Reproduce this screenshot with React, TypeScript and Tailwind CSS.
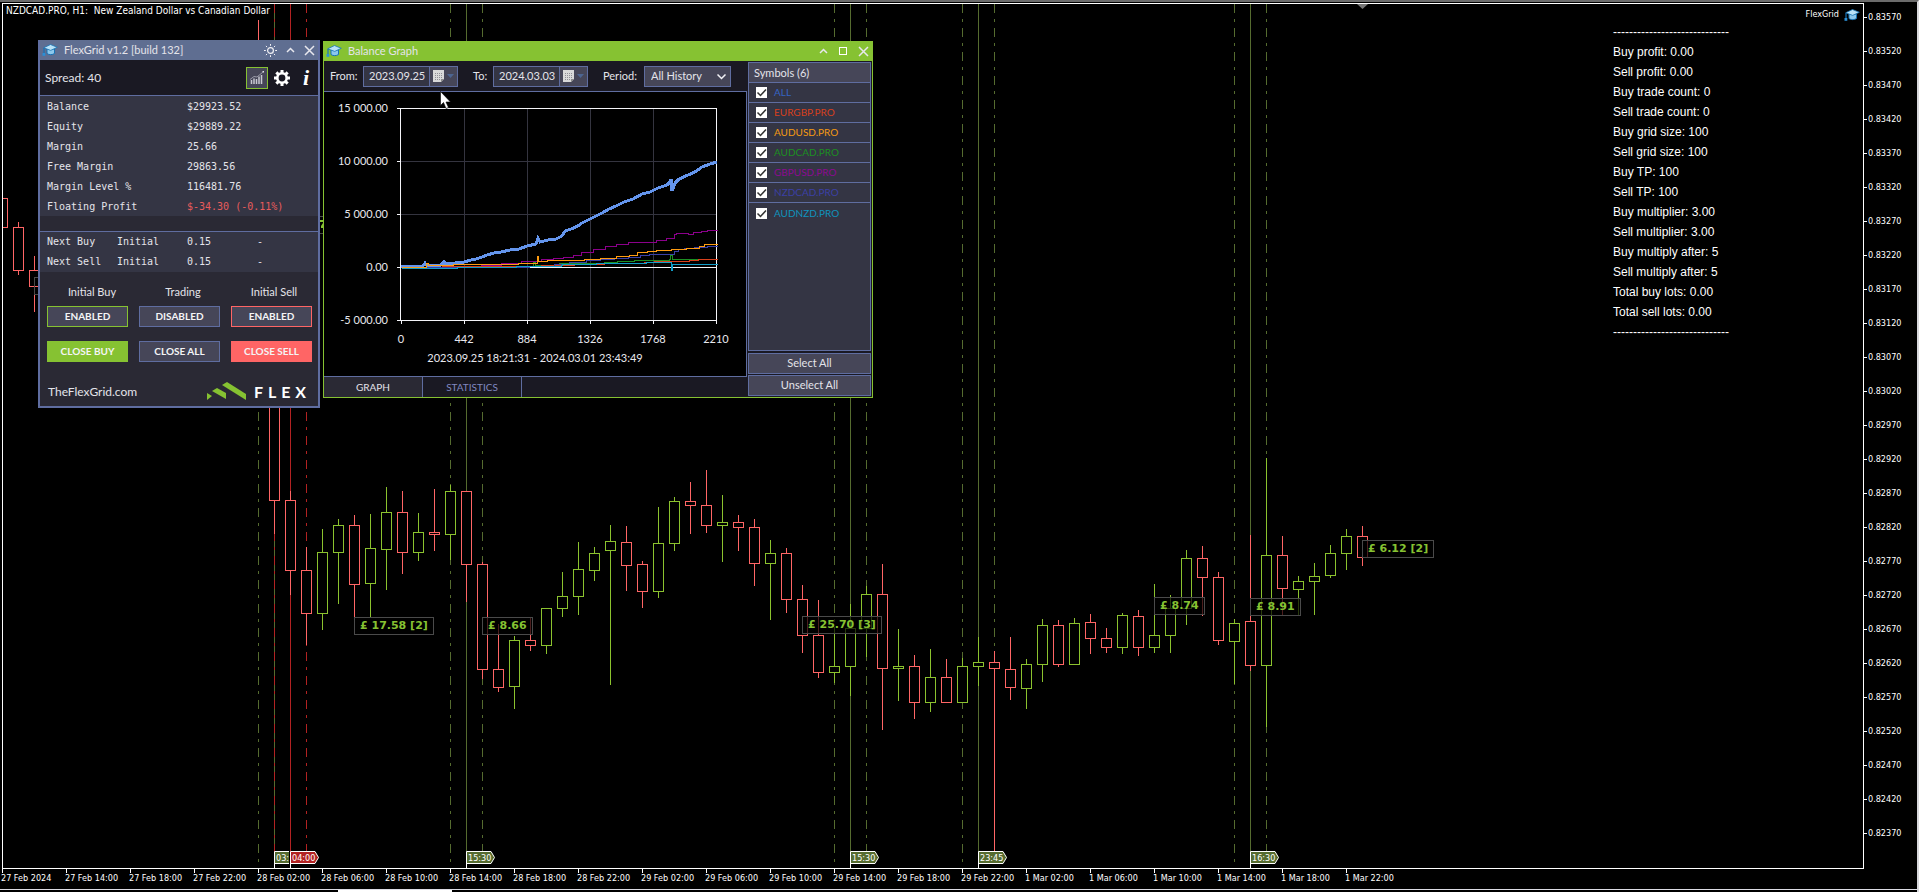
import { useState } from "react";
import type { ReactNode } from "react";

type Candle = [
  x: number,
  side: "up" | "down",
  high: number,
  top: number,
  bottom: number,
  low: number,
];

const candles: Candle[] = [
  [2, "down", 198, 198, 227, 227],
  [18, "down", 222, 227, 270, 274],
  [34, "down", 256, 270, 286, 311],
  [258, "down", 20, 60, 200, 240],
  [274, "down", 200, 240, 500, 533],
  [290, "down", 491, 500, 570, 594],
  [306, "down", 547, 570, 613, 644],
  [322, "up", 529, 552, 613, 629],
  [338, "up", 519, 525, 552, 603],
  [354, "down", 515, 525, 584, 629],
  [370, "up", 514, 548, 583, 616],
  [386, "up", 487, 512, 549, 589],
  [402, "down", 491, 512, 552, 573],
  [418, "up", 513, 532, 552, 560],
  [434, "down", 489, 532, 534, 550],
  [450, "up", 485, 491, 534, 559],
  [466, "down", 491, 491, 564, 601],
  [482, "down", 562, 564, 669, 678],
  [498, "down", 624, 669, 687, 691],
  [514, "up", 636, 640, 686, 708],
  [530, "down", 617, 640, 645, 650],
  [546, "up", 608, 608, 645, 653],
  [562, "up", 572, 596, 608, 616],
  [578, "up", 542, 569, 596, 614],
  [594, "up", 547, 553, 570, 580],
  [610, "up", 525, 541, 550, 684],
  [626, "down", 526, 542, 565, 590],
  [642, "down", 561, 564, 591, 607],
  [658, "up", 507, 543, 591, 597],
  [674, "up", 497, 501, 543, 550],
  [690, "down", 482, 501, 505, 533],
  [706, "down", 470, 505, 525, 532],
  [722, "up", 495, 522, 525, 561],
  [738, "down", 515, 522, 527, 550],
  [754, "down", 519, 527, 563, 585],
  [770, "up", 540, 553, 563, 619],
  [786, "down", 548, 553, 599, 612],
  [802, "down", 585, 599, 635, 652],
  [818, "down", 600, 635, 672, 677],
  [834, "up", 627, 666, 672, 682],
  [850, "up", 604, 628, 666, 695],
  [866, "up", 586, 594, 628, 656],
  [882, "down", 564, 594, 668, 729],
  [898, "up", 629, 666, 668, 700],
  [914, "down", 655, 666, 702, 718],
  [930, "up", 649, 677, 702, 711],
  [946, "down", 659, 677, 702, 702],
  [962, "up", 658, 666, 702, 702],
  [978, "up", 637, 662, 666, 685],
  [994, "down", 651, 662, 668, 851],
  [1010, "down", 637, 669, 687, 699],
  [1026, "up", 659, 664, 688, 708],
  [1042, "up", 619, 625, 664, 681],
  [1058, "down", 620, 625, 664, 666],
  [1074, "up", 618, 623, 664, 664],
  [1090, "down", 614, 622, 638, 653],
  [1106, "down", 628, 638, 647, 652],
  [1122, "up", 613, 615, 647, 653],
  [1138, "down", 610, 616, 647, 655],
  [1154, "up", 584, 635, 647, 652],
  [1170, "up", 595, 608, 635, 652],
  [1186, "up", 550, 558, 608, 624],
  [1202, "down", 546, 558, 577, 615],
  [1218, "down", 572, 577, 640, 644],
  [1234, "up", 619, 623, 641, 683],
  [1250, "down", 535, 621, 665, 670],
  [1266, "up", 458, 555, 665, 726],
  [1282, "down", 536, 555, 588, 614],
  [1298, "up", 576, 581, 589, 614],
  [1314, "up", 563, 576, 581, 614],
  [1330, "up", 545, 553, 575, 577],
  [1346, "up", 529, 536, 553, 569],
  [1362, "down", 526, 536, 557, 565],
];

const OLIVE = "#556b2f";
const BRICK = "#b22222";

const newsLines = [
  { x: 258, color: OLIVE, dashed: true },
  { x: 274, color: OLIVE, dashed: false },
  { x: 274, color: BRICK, dashed: true },
  { x: 290, color: BRICK, dashed: false },
  { x: 306, color: BRICK, dashed: true },
  { x: 450, color: OLIVE, dashed: true },
  { x: 466, color: OLIVE, dashed: false },
  { x: 482, color: OLIVE, dashed: true },
  { x: 834, color: OLIVE, dashed: true },
  { x: 850, color: OLIVE, dashed: false },
  { x: 866, color: OLIVE, dashed: true },
  { x: 962, color: OLIVE, dashed: true },
  { x: 978, color: OLIVE, dashed: false },
  { x: 994, color: OLIVE, dashed: true },
  { x: 1234, color: OLIVE, dashed: true },
  { x: 1250, color: OLIVE, dashed: false },
  { x: 1266, color: OLIVE, dashed: true },
];

// the 04:00 flag starts before the 03:30 one ends, so the first is cut short
const newsFlags = [
  { x: 274, time: "03:", color: OLIVE, width: 15 },
  { x: 290, time: "04:00", color: BRICK, width: 30 },
  { x: 466, time: "15:30", color: OLIVE, width: 30 },
  { x: 850, time: "15:30", color: OLIVE, width: 30 },
  { x: 978, time: "23:45", color: OLIVE, width: 30 },
  { x: 1250, time: "16:30", color: OLIVE, width: 30 },
];

const profitTags = [
  { x: 354, y: 617, text: "£ 17.58 [2]" },
  { x: 482, y: 617, text: "£ 8.66" },
  { x: 802, y: 616, text: "£ 25.70 [3]" },
  { x: 1154, y: 597, text: "£ 8.74" },
  { x: 1250, y: 598, text: "£ 8.91" },
  { x: 1362, y: 540, text: "£ 6.12 [2]" },
];

const prices = Array.from({ length: 25 }, (_, i) =>
  (0.8357 - i * 0.0005).toFixed(5),
);

const times = [
  "27 Feb 2024",
  "27 Feb 14:00",
  "27 Feb 18:00",
  "27 Feb 22:00",
  "28 Feb 02:00",
  "28 Feb 06:00",
  "28 Feb 10:00",
  "28 Feb 14:00",
  "28 Feb 18:00",
  "28 Feb 22:00",
  "29 Feb 02:00",
  "29 Feb 06:00",
  "29 Feb 10:00",
  "29 Feb 14:00",
  "29 Feb 18:00",
  "29 Feb 22:00",
  "1 Mar 02:00",
  "1 Mar 06:00",
  "1 Mar 10:00",
  "1 Mar 14:00",
  "1 Mar 18:00",
  "1 Mar 22:00",
];

const infoLines = [
  "-----------------------------",
  "Buy profit: 0.00",
  "Sell profit: 0.00",
  "Buy trade count: 0",
  "Sell trade count: 0",
  "Buy grid size: 100",
  "Sell grid size: 100",
  "Buy TP: 100",
  "Sell TP: 100",
  "Buy multiplier: 3.00",
  "Sell multiplier: 3.00",
  "Buy multiply after: 5",
  "Sell multiply after: 5",
  "Total buy lots: 0.00",
  "Total sell lots: 0.00",
  "-----------------------------",
];

const account = [
  { label: "Balance", value: "$29923.52" },
  { label: "Equity", value: "$29889.22" },
  { label: "Margin", value: "25.66" },
  { label: "Free Margin", value: "29863.56" },
  { label: "Margin Level %", value: "116481.76" },
  { label: "Floating Profit", value: "$-34.30 (-0.11%)", loss: true },
];

const nextOrders = [
  ["Next Buy", "Initial", "0.15", "-"],
  ["Next Sell", "Initial", "0.15", "-"],
];

const symbols = [
  { name: "ALL", className: "text-[#3564c4]" },
  { name: "EURGBP.PRO", className: "text-[#d8401c]" },
  { name: "AUDUSD.PRO", className: "text-[#f59a12]" },
  { name: "AUDCAD.PRO", className: "text-[#1c8f22]" },
  { name: "GBPUSD.PRO", className: "text-[#8c0a92]" },
  { name: "NZDCAD.PRO", className: "text-[#3b40a6]" },
  { name: "AUDNZD.PRO", className: "text-[#0f93bd]" },
];

const balanceCurve = [
  [77, 175], [99, 174], [101, 171], [103, 174], [117, 173], [120, 170], [122, 172],
  [131, 171], [140, 170], [147, 168], [152, 167], [158, 165], [163, 163], [170, 161],
  [177, 160], [186, 158], [195, 157], [203, 154], [212, 152], [214, 146], [216, 150],
  [224, 148], [232, 147], [238, 144], [241, 139], [247, 137], [254, 134], [258, 131],
  [264, 128], [272, 124], [278, 121], [285, 117], [292, 114], [300, 110], [309, 107],
  [318, 102], [326, 100], [334, 96], [343, 93], [346, 90], [347, 87], [348, 99],
  [351, 91], [355, 87], [364, 83], [371, 80], [378, 75], [386, 72], [393, 70],
];

const symbolCurves: { color: string; points: number[][] }[] = [
  {
    color: "#8b008b",
    points: [
      [77, 175], [150, 174], [157, 173], [177, 171], [197, 169], [217, 167], [229, 166],
      [239, 165], [249, 163], [257, 160], [269, 157], [281, 154], [292, 152], [304, 150],
      [317, 150], [332, 148], [342, 146], [350, 142], [352, 141], [364, 142], [369, 140],
      [377, 139], [383, 138], [393, 138],
    ],
  },
  {
    color: "#1c8f22",
    points: [
      [77, 175], [172, 174], [205, 174], [209, 170], [211, 173], [235, 171], [280, 170],
      [293, 169], [310, 168], [345, 167], [346, 163], [348, 167], [393, 166],
    ],
  },
  {
    color: "#d8401c",
    points: [
      [77, 175], [118, 174], [200, 174], [217, 173], [250, 172], [280, 171], [320, 170],
      [330, 169], [365, 168], [374, 167], [393, 167],
    ],
  },
  {
    color: "#3b40a6",
    points: [
      [77, 175], [205, 174], [230, 172], [245, 170], [262, 168], [276, 167], [290, 166],
      [304, 165], [316, 163], [325, 162], [335, 162], [350, 159], [354, 157], [360, 156],
      [370, 155], [383, 154], [393, 153],
    ],
  },
  {
    color: "#ff9c11",
    points: [
      [77, 175], [101, 175], [102, 171], [104, 173], [128, 173], [129, 172], [165, 172],
      [194, 171], [213, 170], [213, 164], [214, 169], [223, 168], [240, 168], [260, 167],
      [276, 166], [292, 164], [305, 163], [313, 160], [323, 159], [332, 158], [347, 157],
      [362, 156], [375, 154], [380, 152], [388, 152], [393, 151],
    ],
  },
  {
    color: "#0f9cc8",
    points: [
      [77, 176], [133, 175], [192, 174], [237, 173], [238, 172], [250, 172], [272, 171],
      [322, 170], [342, 170], [346, 170], [347, 178], [348, 172], [393, 172],
    ],
  },
];

// a symbol's balance moves only when a trade closes, so it is drawn as steps
function stepPath(points: number[][]) {
  return points
    .map(([x, y], i) => (i === 0 ? `M${x} ${y}` : `H${x}V${y}`))
    .join("");
}

function CapIcon() {
  return (
    <svg width="16" height="14" viewBox="0 0 16 14" aria-hidden="true">
      <path d="M5 6v4.500c1.800 1.500 5.500 1.500 7.500 0V6z" fill="#8cc8ec" stroke="#1672b4" />
      <path d="M8.500 1.500 15.300 4.300 8.700 7.400 1.700 4.800z" fill="#b9e2f7" stroke="#1672b4" strokeWidth=".8" />
      <path d="M2 5v5" stroke="#1672b4" strokeWidth="1.200" />
      <path d="M.5 10h2.800v2.800H.5z" fill="#2b8fd6" />
    </svg>
  );
}

function ChevronUpIcon() {
  return (
    <svg width="9" height="6" viewBox="0 0 9 6" fill="none" aria-hidden="true">
      <path d="M1 5 4.500 1.500 8 5" stroke="#e8e8ee" strokeWidth="1.500" />
    </svg>
  );
}

function CloseIcon() {
  return (
    <svg width="11" height="11" viewBox="0 0 11 11" fill="none" aria-hidden="true">
      <path d="M1 1l9 9M10 1l-9 9" stroke="#e8e8ee" strokeWidth="1.500" />
    </svg>
  );
}

function SunIcon() {
  return (
    <svg width="13" height="13" viewBox="0 0 13 13" fill="none" aria-hidden="true">
      <circle cx="6.500" cy="6.500" r="2.900" stroke="#f2f2f6" strokeWidth="1.200" />
      <path
        d="M6.500 0v1.800M6.500 11.200V13M0 6.500h1.800M11.200 6.500H13M1.900 1.900l1.200 1.200M9.900 9.900l1.200 1.200M11.100 1.900 9.900 3.100M3.100 9.900l-1.200 1.200"
        stroke="#f2f2f6"
      />
    </svg>
  );
}

function GearIcon() {
  return (
    <svg width="16" height="16" viewBox="0 0 16 16" fill="none" aria-hidden="true">
      <circle cx="8" cy="8" r="4.700" stroke="#fff" strokeWidth="2.600" />
      {[0, 45, 90, 135].map((angle) => (
        <path
          key={angle}
          d="M8 0v3M8 13v3"
          stroke="#fff"
          strokeWidth="3"
          transform={`rotate(${angle} 8 8)`}
        />
      ))}
    </svg>
  );
}

function BarsIcon() {
  return (
    <svg width="14" height="13" viewBox="0 0 14 13" fill="none" aria-hidden="true">
      <path
        d="M1.500 13V9M4 13V7.500M6.500 13V8M9 13V5.500M11.500 13V4"
        stroke="#c9c9d2"
        strokeWidth="1.500"
      />
      <path d="M0 8.500 4 5.500l3 .5 6-5" stroke="#9a9aa8" />
      <path d="M12 0h2v2z" fill="#e4e4ea" />
    </svg>
  );
}

function CalendarIcon() {
  return (
    <svg width="11" height="12" viewBox="0 0 11 12" aria-hidden="true">
      <path d="M0 0h11v9l-3 3H0z" fill="#d9d9d9" />
      <path d="M8 12V9h3z" fill="#8b8b8b" />
      <path
        d="M2 3.500h7M2 5.500h7M2 7.500h7M2 9.500h5"
        stroke="#8e8e94"
        strokeDasharray="1 1"
      />
    </svg>
  );
}

function FlexMark() {
  return (
    <svg width="39" height="18" viewBox="0 0 39 18" fill="#86c232" aria-hidden="true">
      <path d="M0 11l5 3-5 4z" />
      <path d="M5 9l5-3 9 5v6z" />
      <path d="M15 3l5-3 19 12v6z" />
    </svg>
  );
}

function CandleShape({ data }: { data: Candle }) {
  const [x, side, high, top, bottom, low] = data;
  const color = side === "up" ? "#8bc22e" : "#ff6565";
  return (
    <g stroke={color} fill="none" shapeRendering="crispEdges">
      {high < top && <path d={`M${x + 0.5} ${high}V${top}`} />}
      {low > bottom && <path d={`M${x + 0.5} ${bottom}V${low + 1}`} />}
      <rect x={x - 4.5} y={top + 0.5} width="10" height={bottom - top} fill="#000" />
    </g>
  );
}

function PriceChart() {
  return (
    <svg className="absolute inset-0 h-full w-full" role="img" aria-label="NZDCAD.PRO H1 candles">
      <g transform="translate(-3 -4)">
        {newsLines.map((line, i) => (
          <line
            key={i}
            x1={line.x + 0.5}
            x2={line.x + 0.5}
            y1="4"
            y2="100%"
            stroke={line.color}
            strokeDasharray={line.dashed ? "9 6 3 6" : undefined}
            shapeRendering="crispEdges"
          />
        ))}
        {candles.map((candle) => (
          <CandleShape key={candle[0]} data={candle} />
        ))}
        <path d="M34.500 277.500h6M34.500 294.500h6M34.500 277v18M318 216.500h6M318 233.500h6" stroke="#4a4a4a" />
        <path d="M320 220h3v2h-3zM321 226l2-3v5h-2z" fill="#86c232" />
        <path d="M1357 4h11l-5.500 5z" fill="#777" />
      </g>
    </svg>
  );
}

type Flag = (typeof newsFlags)[number];

function NewsFlag({ flag }: { flag: Flag }) {
  return (
    <div
      className="absolute bottom-0 h-[17px] overflow-hidden"
      style={{ left: flag.x - 3, width: flag.width }}
    >
      <svg width="30" height="17" className="absolute left-0 top-0" aria-hidden="true">
        <path d="M.5 17V.5H25l3.500 6L25 12.500H.5" fill={flag.color} stroke="#fff" />
      </svg>
      <span className="relative block pl-[2px] leading-[14px] text-white">{flag.time}</span>
    </div>
  );
}

type DateFieldProps = {
  id: string;
  label: string;
  labelClass: string;
  value: string;
};

function DateField({ id, label, labelClass, value }: DateFieldProps) {
  return (
    <div className="flex items-center">
      <label htmlFor={id} className={labelClass}>
        {label}
      </label>
      <div className="flex h-[21px] w-[95px] border border-[#5f6da0] bg-[#343544]">
        <input
          id={id}
          type="text"
          defaultValue={value}
          className="min-w-0 flex-1 bg-transparent pl-[5px] outline-none"
        />
        <button
          type="button"
          aria-label={`Pick date ${label}`}
          className="flex w-7 items-center gap-[3px] border-l border-[#5f6da0] bg-[#464658] pl-[3px]"
        >
          <CalendarIcon />
          <svg width="7" height="4" aria-hidden="true">
            <path d="M0 0h7L3.500 4z" fill="#4d6591" />
          </svg>
        </button>
      </div>
    </div>
  );
}

function PanelButton({ className, children }: { className: string; children: ReactNode }) {
  return (
    <button type="button" className={`h-[21px] border font-bold text-[#f4f4f6] ${className}`}>
      {children}
    </button>
  );
}

function FlexGridPanel() {
  return (
    <section className="absolute left-[38px] top-[38px] w-[282px] border-2 border-t-0 border-[#5f6da0] bg-[#2a2934] font-['Lato',sans-serif] text-[11px] text-[#e4e4ea]">
      <header className="flex h-5 items-center bg-[#5f6e91] pl-[2px] pr-[3px]">
        <CapIcon />
        <h2 className="ml-[6px] flex-1">FlexGrid v1.2 [build 132]</h2>
        <div className="flex items-center gap-[9px]">
          <button type="button" aria-label="Theme"><SunIcon /></button>
          <button type="button" aria-label="Collapse"><ChevronUpIcon /></button>
          <button type="button" aria-label="Close"><CloseIcon /></button>
        </div>
      </header>

      <div className="flex h-9 items-center border-b border-[#5f6da0] bg-[#1a1923] pl-[5px] pr-2">
        <p className="flex-1 text-[12px]">Spread: 40</p>
        <button
          type="button"
          aria-label="Balance graph"
          className="flex h-[22px] w-[22px] items-center justify-center border border-[#86c232] bg-[#464658]"
        >
          <BarsIcon />
        </button>
        <button type="button" aria-label="Settings" className="ml-[6px]"><GearIcon /></button>
        <button
          type="button"
          aria-label="Info"
          className="ml-3 w-2 font-['Liberation_Serif',serif] text-[22px] font-bold italic leading-5 text-white"
        >
          i
        </button>
      </div>

      <table className="w-full table-fixed bg-[#343544] font-['DejaVu_Sans_Mono',monospace] text-[10px]">
        <tbody>
          {account.map((row) => (
            <tr key={row.label} className="h-5">
              <th scope="row" className="w-[147px] pl-[7px] text-left font-normal">{row.label}</th>
              <td className={row.loss ? "text-[#e85c5c]" : ""}>{row.value}</td>
            </tr>
          ))}
        </tbody>
      </table>

      <table className="mt-[15px] w-full table-fixed border-t border-[#5f6da0] bg-[#343544] font-['DejaVu_Sans_Mono',monospace] text-[10px]">
        <tbody>
          {nextOrders.map(([label, kind, lots, level]) => (
            <tr key={label} className="h-5">
              <th scope="row" className="w-[77px] pl-[7px] text-left font-normal">{label}</th>
              <td className="w-[70px]">{kind}</td>
              <td className="w-[70px]">{lots}</td>
              <td>{level}</td>
            </tr>
          ))}
        </tbody>
      </table>

      <div className="grid grid-cols-3 gap-x-[11px] pl-3 pr-1 pt-[12px] text-center">
        <span className="leading-4">Initial Buy</span>
        <span className="leading-4">Trading</span>
        <span className="leading-4">Initial Sell</span>
      </div>
      <div className="grid grid-cols-3 gap-x-[11px] gap-y-[14px] pl-[7px] pr-[6px] pt-[6px] text-[10px]">
        <PanelButton className="border-[#86c232] bg-[#464658]">ENABLED</PanelButton>
        <PanelButton className="border-[#5f6da0] bg-[#464658]">DISABLED</PanelButton>
        <PanelButton className="border-[#ff6565] bg-[#464658]">ENABLED</PanelButton>
        <PanelButton className="border-[#86c232] bg-[#86c232]">CLOSE BUY</PanelButton>
        <PanelButton className="border-[#5f6da0] bg-[#464658]">CLOSE ALL</PanelButton>
        <PanelButton className="border-[#ff6565] bg-[#ff6565]">CLOSE SELL</PanelButton>
      </div>

      <footer className="mt-5 flex h-6 items-end pb-[6px] pl-2 pr-3">
        <a href="#site" className="flex-1 text-[12px] leading-4">TheFlexGrid.com</a>
        <FlexMark />
        <span className="ml-2 flex w-[52px] justify-between text-[16px] font-bold leading-4 text-white">
          <span>F</span>
          <span>L</span>
          <span>E</span>
          <span>X</span>
        </span>
      </footer>
    </section>
  );
}

const gridX = [77, 140, 203, 266, 329, 392];
const gridY = [16, 69, 122, 175, 228];

function BalanceChart() {
  const xLabels = ["0", "442", "884", "1326", "1768", "2210"];
  const yLabels = ["15 000.00", "10 000.00", "5 000.00", "0.00", "-5 000.00"];
  return (
    <svg
      width="422"
      height="284"
      className="block font-['Lato',sans-serif] text-[11px]"
      role="img"
      aria-label="Balance by trade"
    >
      <g stroke="#34343f" shapeRendering="crispEdges">
        {gridX.slice(1, 5).map((x) => (
          <path key={x} d={`M${x}.5 16V228`} />
        ))}
        {gridY.slice(1, 3).map((y) => (
          <path key={y} d={`M77 ${y}.5H392`} />
        ))}
      </g>
      <g stroke="#f4f4f8" fill="none" shapeRendering="crispEdges">
        <rect x="76.500" y="16.500" width="316" height="212" />
        <path d="M77 175.500H393" />
        {gridY.map((y) => (
          <path key={y} d={`M73 ${y}.5h4`} />
        ))}
        {gridX.map((x) => (
          <path key={x} d={`M${x}.5 228v4`} />
        ))}
      </g>
      <polyline
        points={balanceCurve.join(" ")}
        fill="none"
        stroke="#6495ed"
        strokeWidth="3"
        shapeRendering="crispEdges"
      />
      {symbolCurves.map((curve) => (
        <path
          key={curve.color}
          d={stepPath(curve.points)}
          transform="translate(.5 .5)"
          fill="none"
          stroke={curve.color}
          shapeRendering="crispEdges"
        />
      ))}
      <g fill="#e8e8ee">
        {yLabels.map((label, i) => (
          <text key={label} x="64" y={gridY[i] + 4} textAnchor="end">{label}</text>
        ))}
        {xLabels.map((label, i) => (
          <text key={label} x={gridX[i]} y="251" textAnchor="middle">{label}</text>
        ))}
        <text x="211" y="270" textAnchor="middle">
          2023.09.25 18:21:31 - 2024.03.01 23:43:49
        </text>
      </g>
    </svg>
  );
}

function BalanceWindow() {
  const [hidden, setHidden] = useState<string[]>([]);

  const toggle = (name: string) =>
    setHidden((prev) =>
      prev.includes(name) ? prev.filter((item) => item !== name) : [...prev, name],
    );

  return (
    <section className="absolute left-[323px] top-[39px] w-[550px] border border-t-0 border-[#86c232] bg-[#1a1923] font-['Lato',sans-serif] text-[11px] text-[#e4e4ea]">
      <header className="flex h-5 items-center bg-[#86c232] pl-[2px] pr-[3px]">
        <CapIcon />
        <h2 className="ml-[6px] flex-1">Balance Graph</h2>
        <div className="flex items-center gap-[11px]">
          <button type="button" aria-label="Collapse"><ChevronUpIcon /></button>
          <button type="button" aria-label="Maximize" className="h-2 w-2 border border-white" />
          <button type="button" aria-label="Close"><CloseIcon /></button>
        </div>
      </header>

      <div className="flex">
        <div className="w-[423px]">
          <div className="flex h-[30px] items-center gap-[15px] pl-[6px]">
            <DateField id="from" label="From:" labelClass="w-[33px]" value="2023.09.25" />
            <DateField id="to" label="To:" labelClass="w-5" value="2024.03.03" />
            <div className="flex items-center">
              <label htmlFor="period" className="w-[41px]">Period:</label>
              <div className="relative">
                <select
                  id="period"
                  className="h-[21px] w-[87px] appearance-none border border-[#5f6da0] bg-[#464658] pl-[6px] outline-none"
                >
                  <option>All History</option>
                </select>
                <svg width="9" height="6" className="pointer-events-none absolute right-[5px] top-2" fill="none" aria-hidden="true">
                  <path d="M.5.500l4 4 4-4" stroke="#f2f2f6" strokeWidth="1.500" />
                </svg>
              </div>
            </div>
          </div>
          <div className="border-y border-r border-[#5f6da0] bg-black">
            <BalanceChart />
          </div>
          <div className="flex h-5" role="tablist">
            <button type="button" role="tab" className="w-[98px] bg-[#2a2934] text-[10px]">GRAPH</button>
            <button type="button" role="tab" className="w-[100px] border-x border-[#5f6da0] text-[10px] text-[#8088c0]">
              STATISTICS
            </button>
          </div>
        </div>

        <div className="ml-px flex flex-1 flex-col gap-px pb-px pr-px pt-px">
          <div className="flex flex-1 flex-col border border-[#5f6da0] bg-[#343544]">
            <h3 className="h-5 border-b border-[#5f6da0] bg-[#464658] pl-[5px] leading-[20px]">
              Symbols (6)
            </h3>
            {symbols.map((symbol) => (
              <label
                key={symbol.name}
                className={`flex h-5 items-center border-b border-[#5f6da0] pl-[7px] text-[10px] last:border-b-0 ${symbol.className}`}
              >
                <input
                  type="checkbox"
                  checked={!hidden.includes(symbol.name)}
                  onChange={() => toggle(symbol.name)}
                  className="peer h-[11px] w-[11px] appearance-none bg-white"
                />
                <svg width="11" height="11" className="invisible -ml-[11px] peer-checked:visible" fill="none" aria-hidden="true">
                  <path d="M1.500 5.500l3 3 5.500-6" stroke="#333" strokeWidth="1.500" />
                </svg>
                <span className="ml-[7px]">{symbol.name}</span>
              </label>
            ))}
          </div>
          <button
            type="button"
            onClick={() => setHidden([])}
            className="mt-px h-[21px] border border-[#5f6da0] bg-[#464658]"
          >
            Select All
          </button>
          <button
            type="button"
            onClick={() => setHidden(symbols.map((symbol) => symbol.name))}
            className="h-[21px] border border-[#5f6da0] bg-[#464658]"
          >
            Unselect All
          </button>
        </div>
      </div>
    </section>
  );
}

export default function App() {
  return (
    <main className="relative flex min-h-screen flex-col overflow-hidden border-r-2 border-t-2 border-r-[#d8d8dc] border-t-[#6b6b6b] bg-black font-['DejaVu_Sans_Condensed','DejaVu_Sans',sans-serif] text-[9px] text-white">
      <div className="flex flex-1 pl-[2px]">
        <div className="relative mt-px flex flex-1 justify-between border border-white">
          <PriceChart />
          <h1 className="relative h-4 whitespace-pre bg-black pl-[3px] text-[10px] leading-[14px]">
            NZDCAD.PRO, H1:{"  "}New Zealand Dollar vs Canadian Dollar
          </h1>
          <div className="relative w-[250px]">
            <div className="flex items-center justify-end gap-[5px] pr-[3px] pt-1">
              <span>FlexGrid</span>
              <CapIcon />
            </div>
            <ul className="font-['Liberation_Sans',sans-serif] text-[12px] leading-5">
              {infoLines.map((line, i) => (
                <li key={i}>{line}</li>
              ))}
            </ul>
          </div>
          {profitTags.map((tag) => (
            <div
              key={tag.x}
              className="absolute h-[18px] border border-[#4a4a4a] bg-black/70 px-[5px] font-['DejaVu_Sans',sans-serif] text-[11px] font-bold leading-4 text-[#86c232]"
              style={{ left: tag.x - 3, top: tag.y - 4 }}
            >
              {tag.text}
            </div>
          ))}
          {newsFlags.map((flag) => (
            <NewsFlag key={flag.x} flag={flag} />
          ))}
        </div>
        <ol className="w-[53px] pt-[9px] leading-3">
          {prices.map((price) => (
            <li key={price} className="flex h-[34px]">
              <span className="mr-px mt-[6px] h-px w-[3px] bg-white" />
              {price}
            </li>
          ))}
        </ol>
      </div>

      <ol className="flex h-5 pl-px">
        {times.map((time) => (
          <li key={time} className="w-16 shrink-0 whitespace-nowrap">
            <span className="ml-px block h-1 w-px bg-white" />
            <span className="block leading-[10px]">{time}</span>
          </li>
        ))}
      </ol>
      <div className="h-[3px] border-t border-[#dcdce4]">
        <div className="ml-[338px] h-[2px] w-[114px] bg-white" />
      </div>

      <FlexGridPanel />
      <BalanceWindow />

      <svg width="12" height="18" className="absolute left-[440px] top-[89px]" aria-hidden="true">
        <path d="M.5.500v14l3-3 2.500 6 2.500-1-2.500-5.500h4.500z" fill="#fff" stroke="#000" strokeWidth=".6" />
      </svg>
    </main>
  );
}
